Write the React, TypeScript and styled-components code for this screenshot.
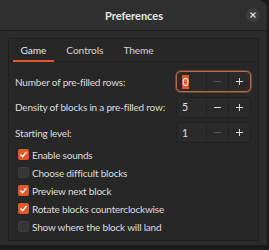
import React from "react";
import styled, { createGlobalStyle } from "styled-components";

const Global = createGlobalStyle`
  html, body { margin: 0; padding: 0; background: #1b1b1b; }
  body { font-family: Lato, "Noto Sans", sans-serif; }
  * { box-sizing: border-box; }
`;

const Window = styled.div`
  width: 267px;
  height: 245px;
  background: #2b2b2b;
  border-radius: 0 9px 0 0;
  display: flex;
  flex-direction: column;
  overflow: hidden;
  color: #e8e8e8;
`;

const HeaderBar = styled.div`
  height: 31px;
  flex: none;
  background: #2f2f2f;
  border-bottom: 1px solid #1f1f1f;
  display: flex;
  align-items: center;
  justify-content: center;
  position: relative;
`;

const Title = styled.div`
  font-size: 11px;
  font-weight: 700;
  color: #e6e6e6;
  padding-left: 1px;
`;

const CloseButton = styled.div`
  position: absolute;
  right: 7px;
  top: 8px;
  width: 14px;
  height: 14px;
  border-radius: 50%;
  background: #3d3d3d;
  display: flex;
  align-items: center;
  justify-content: center;
`;

const Body = styled.div`
  flex: 1;
  padding: 7px 8px 4px 8px;
  display: flex;
`;

const Notebook = styled.div`
  flex: 1;
  border: 1px solid #1f1f1f;
  background: #272727;
  display: flex;
  flex-direction: column;
`;

const TabBar = styled.div`
  height: 23px;
  flex: none;
  display: flex;
  padding-left: 4px;
  border-bottom: 1px solid #1f1f1f;
`;

const Tab = styled.div<{ $active?: boolean }>`
  position: relative;
  padding: 0 7.5px;
  display: flex;
  align-items: center;
  justify-content: center;
  font-size: 10.2px;
  letter-spacing: -0.1px;
  color: ${(p) => (p.$active ? "#e8e8e8" : "#d4d4d4")};
  margin-right: 5px;
  &::after {
    content: "";
    position: absolute;
    left: 0;
    right: 0;
    bottom: -1px;
    height: 2px;
    background: ${(p) => (p.$active ? "#e0582a" : "transparent")};
  }
`;

const Content = styled.div`
  padding: 7px 7px 0 6px;
  display: flex;
  flex-direction: column;
`;

const SpinRow = styled.div`
  height: 25.5px;
  display: flex;
  align-items: center;
  justify-content: space-between;
`;

const Label = styled.div`
  font-size: 10px;
  letter-spacing: -0.2px;
  color: #dedede;
  white-space: nowrap;
`;

const Spin = styled.div<{ $focus?: boolean }>`
  flex: none;
  width: 75px;
  height: 21px;
  border-radius: 5px;
  background: #2a2a2a;
  border: 1px solid ${(p) => (p.$focus ? "#b86a48" : "#202020")};
  box-shadow: ${(p) => (p.$focus ? "0 0 0 1px rgba(200,110,70,0.45)" : "none")};
  display: flex;
  align-items: stretch;
`;

const SpinEntry = styled.div`
  width: 29px;
  display: flex;
  align-items: center;
  padding-left: 5px;
  font-size: 10.5px;
  color: #e0e0e0;
`;

const Selected = styled.span`
  background: #e0582a;
  color: #ffffff;
  padding: 1px 0.5px;
  line-height: 12px;
`;

const SpinButton = styled.div<{ $disabled?: boolean }>`
  flex: 1;
  border-left: 1px solid #222222;
  display: flex;
  align-items: center;
  justify-content: center;
  color: ${(p) => (p.$disabled ? "#555555" : "#d8d8d8")};
`;

const CheckList = styled.div`
  display: flex;
  flex-direction: column;
  padding-left: 3px;
`;

const CheckRow = styled.div`
  height: 18px;
  display: flex;
  align-items: center;
  gap: 3px;
`;

const Box = styled.div<{ $checked?: boolean }>`
  width: 11px;
  height: 11px;
  border-radius: 2px;
  background: ${(p) => (p.$checked ? "#e0582a" : "#363636")};
  border: ${(p) => (p.$checked ? "none" : "1px solid #3e3e3e")};
  display: flex;
  align-items: center;
  justify-content: center;
`;

const Minus = () => (
  <svg width="9" height="9" viewBox="0 0 9 9">
    <path d="M1 4.5h7" stroke="currentColor" strokeWidth="1" />
  </svg>
);
const Plus = () => (
  <svg width="9" height="9" viewBox="0 0 9 9">
    <path d="M1 4.5h7M4.5 1v7" stroke="currentColor" strokeWidth="1" />
  </svg>
);
const Check = () => (
  <svg width="9" height="9" viewBox="0 0 9 9">
    <path d="M1.5 4.6l2 2 4-4.6" fill="none" stroke="#fff" strokeWidth="1.4" />
  </svg>
);

const spins = [
  { label: "Number of pre-filled rows:", value: "0", focus: true, minDis: true },
  { label: "Density of blocks in a pre-filled row:", value: "5", focus: false, minDis: false },
  { label: "Starting level:", value: "1", focus: false, minDis: true },
];

const checks = [
  { label: "Enable sounds", on: true },
  { label: "Choose difficult blocks", on: false },
  { label: "Preview next block", on: true },
  { label: "Rotate blocks counterclockwise", on: true },
  { label: "Show where the block will land", on: false },
];

export default function App() {
  return (
    <>
      <Global />
      <Window>
        <HeaderBar>
          <Title>Preferences</Title>
          <CloseButton>
            <svg width="6" height="6" viewBox="0 0 6 6">
              <path d="M0.5 0.5l5 5M5.5 0.5l-5 5" stroke="#e0e0e0" strokeWidth="1.3" />
            </svg>
          </CloseButton>
        </HeaderBar>
        <Body>
          <Notebook>
            <TabBar>
              <Tab $active>Game</Tab>
              <Tab>Controls</Tab>
              <Tab>Theme</Tab>
            </TabBar>
            <Content>
              {spins.map((s) => (
                <SpinRow key={s.label}>
                  <Label>{s.label}</Label>
                  <Spin $focus={s.focus}>
                    <SpinEntry>{s.focus ? <Selected>{s.value}</Selected> : s.value}</SpinEntry>
                    <SpinButton $disabled={s.minDis}>
                      <Minus />
                    </SpinButton>
                    <SpinButton>
                      <Plus />
                    </SpinButton>
                  </Spin>
                </SpinRow>
              ))}
              <CheckList>
                {checks.map((c) => (
                  <CheckRow key={c.label}>
                    <Box $checked={c.on}>{c.on && <Check />}</Box>
                    <Label>{c.label}</Label>
                  </CheckRow>
                ))}
              </CheckList>
            </Content>
          </Notebook>
        </Body>
      </Window>
    </>
  );
}
